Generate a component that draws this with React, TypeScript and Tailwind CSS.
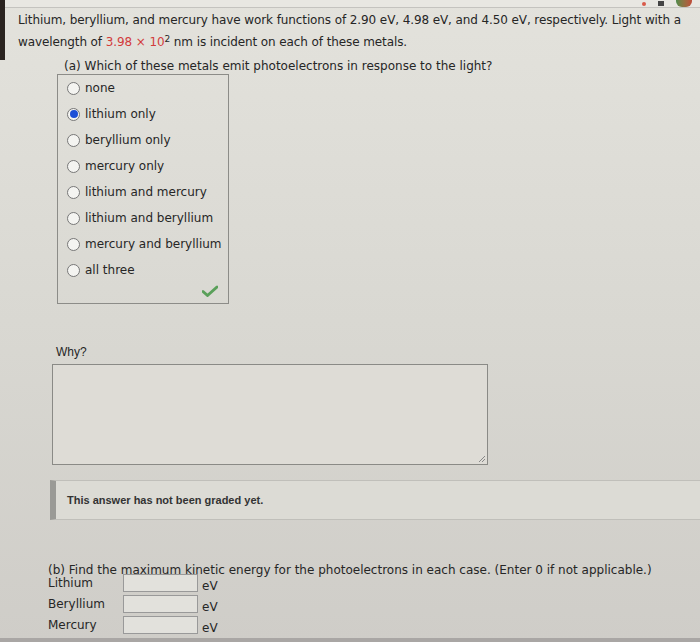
import React from "react";

const options = [
  "none",
  "lithium only",
  "beryllium only",
  "mercury only",
  "lithium and mercury",
  "lithium and beryllium",
  "mercury and beryllium",
  "all three",
];

const metals = ["Lithium", "Beryllium", "Mercury"];

function Radio({ checked }: { checked?: boolean }) {
  return (
    <span className="w-[13px] h-[13px] rounded-full border border-[#777] bg-[#f4f4f1] flex items-center justify-center shrink-0">
      {checked && <span className="w-[8px] h-[8px] rounded-full bg-[#1d4fd6]" />}
    </span>
  );
}

export default function App() {
  return (
    <div className="w-[700px] h-[642px] overflow-hidden relative bg-gradient-to-b from-[#e3e2dc] via-[#d9d8d2] to-[#cfcdc8] text-[#262626] font-['DejaVu_Sans',sans-serif]">
      {/* browser edge */}
      <div className="h-[8px] border-b border-[#c4c3bf] bg-[#e8e7e2] flex justify-end items-center gap-3 pr-2">
        <span className="w-[4px] h-[4px] bg-[#d85a4a] rounded-full" />
        <span className="w-[6px] h-[5px] bg-[#444]" />
        <span className="w-[16px] h-[12px] rounded-full bg-gradient-to-r from-[#4a8a4a] to-[#c04a3a] -mt-[6px]" />
      </div>
      <div className="absolute left-0 top-0 w-[5px] h-[60px] bg-[#2a2420]" />

      <div className="pl-[18px] pt-[1px] text-[12px] leading-[22px] tracking-[-0.1px]">
        <p>
          Lithium, beryllium, and mercury have work functions of 2.90 eV, 4.98 eV, and 4.50 eV, respectively. Light with a
        </p>
        <p>
          wavelength of <span className="text-[#d23b3b]">3.98 × 10</span>
          <sup className="text-[9px]">2</sup> nm is incident on each of these metals.
        </p>
      </div>

      <div className="pl-[64px] mt-[5px] text-[12px] leading-[16px]">
        (a) Which of these metals emit photoelectrons in response to the light?
      </div>

      <div className="ml-[57px] mt-[0px] w-[172px] h-[230px] border border-[#8c8c88] relative">
        {options.map((o, i) => (
          <div key={o} className="h-[26px] flex items-center gap-[5px] pl-[9px] text-[12px]">
            <Radio checked={i === 1} />
            <span>{o}</span>
          </div>
        ))}
        <svg className="absolute right-[10px] bottom-[6px]" width="16" height="12" viewBox="0 0 16 12">
          <path d="M1 6.5 L5.5 10.5 L15 2" fill="none" stroke="#5aa05a" strokeWidth="3" strokeLinecap="round" strokeLinejoin="round" />
        </svg>
      </div>

      <div className="font-['Liberation_Sans',sans-serif] pl-[56px] mt-[40px] text-[12px] leading-[16px]">Why?</div>
      <div className="ml-[52px] mt-[4px] w-[436px] h-[101px] border border-[#8a8a86] bg-[#dedcd6] relative">
        <svg className="absolute right-[1px] bottom-[1px]" width="8" height="8" viewBox="0 0 8 8">
          <path d="M7 1 L1 7 M7 4 L4 7" stroke="#888" strokeWidth="1" />
        </svg>
      </div>

      <div className="ml-[50px] mt-[15px] h-[40px] border-y border-[#c0bfba] border-l-[6px] border-l-[#9a9a96] bg-[#dcdbd5] flex items-center pl-[11px] font-['Liberation_Sans',sans-serif] text-[11px] font-bold text-[#333]">
        This answer has not been graded yet.
      </div>

      <div className="pl-[48px] mt-[42px] text-[12px] leading-[16px]">
        (b) Find the maximum kinetic energy for the photoelectrons in each case. (Enter 0 if not applicable.)
      </div>
      <div className="pl-[48px] flex flex-col gap-[3px] mt-[-4px]">
        {metals.map((m) => (
          <div key={m} className="flex items-center text-[12px] h-[18px]">
            <span className="w-[75px]">{m}</span>
            <span className="w-[75px] h-[18px] border border-[#999] bg-[#e2e1dc]" />
            <span className="ml-[4px] mt-[5px] leading-[14px]">eV</span>
          </div>
        ))}
      </div>
      <div className="absolute left-0 bottom-0 w-full h-[4px] bg-[#a9a6a4]" />
    </div>
  );
}
